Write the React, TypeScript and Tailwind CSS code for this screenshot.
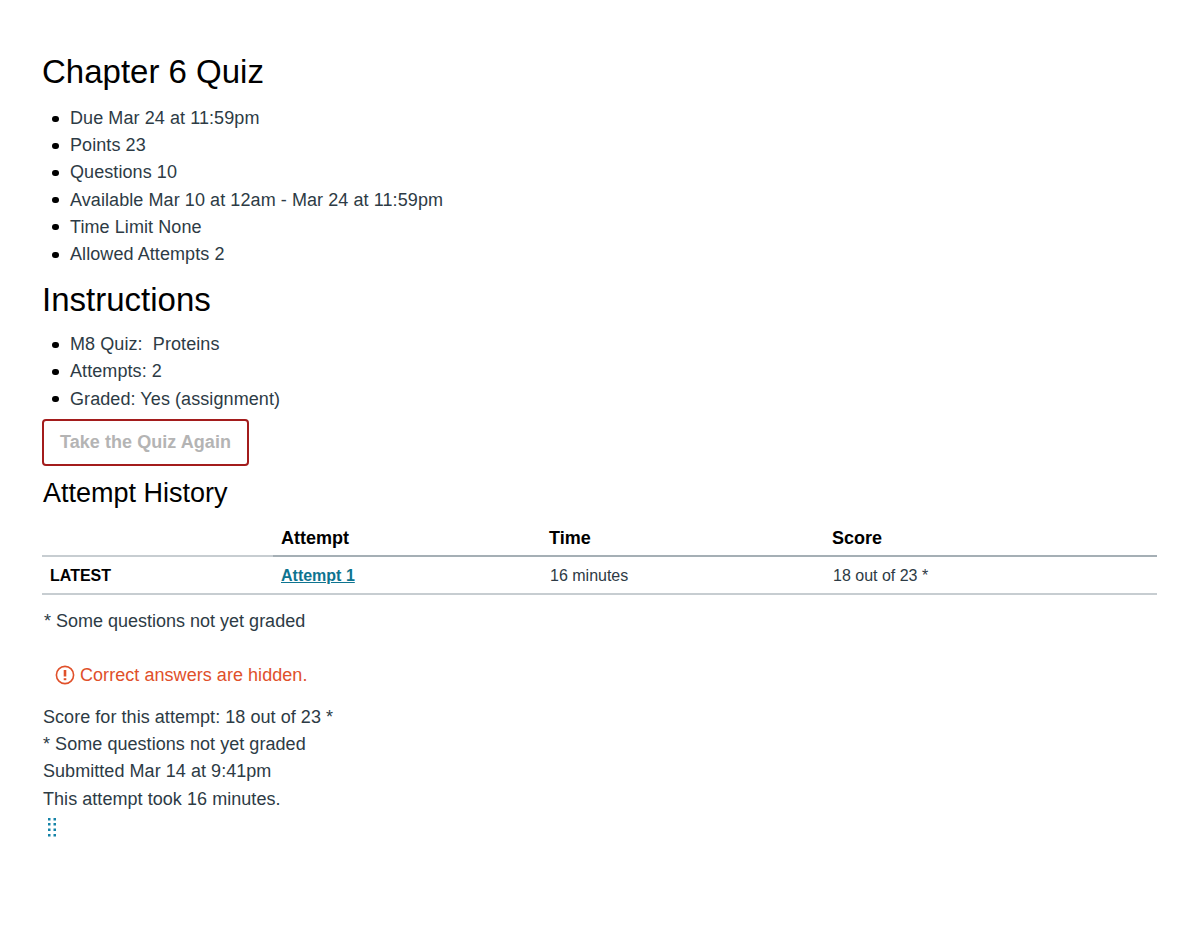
import React from 'react';

const details = [
  'Due Mar 24 at 11:59pm',
  'Points 23',
  'Questions 10',
  'Available Mar 10 at 12am - Mar 24 at 11:59pm',
  'Time Limit None',
  'Allowed Attempts 2',
];

const instructions = ['M8 Quiz:  Proteins', 'Attempts: 2', 'Graded: Yes (assignment)'];

const BulletList = ({ items }: { items: string[] }) => (
  <ul className="pl-[10px] text-[18px] tracking-[0.08px] leading-[27.2px] text-[#2d3b45] whitespace-pre">
    {items.map((item) => (
      <li key={item} className="flex items-center gap-[11px]">
        <span className="w-[7px] h-[6px] rounded-full bg-black" />
        <span>{item}</span>
      </li>
    ))}
  </ul>
);

export default function App() {
  return (
    <div className="min-h-[927px] bg-white pl-[42px] pr-[43px] pt-[52px] font-['Liberation_Sans',Arial,sans-serif] text-[#2d3b45]">
      <h1 className="text-[33px] leading-[40px] text-black mb-[13px]">Chapter 6 Quiz</h1>
      <BulletList items={details} />

      <h2 className="text-[33px] leading-[40px] text-black mt-[12px] mb-[11px]">Instructions</h2>
      <BulletList items={instructions} />

      <button className="block mt-[6px] w-[207px] h-[47px] rounded-[4px] border-2 border-[#a31c1c] text-[18px] font-bold text-[#b4b4b4] tracking-[0.05px]">
        Take the Quiz Again
      </button>

      <h3 className="text-[27px] leading-[34px] text-black mt-[10px] ml-px">Attempt History</h3>

      <table className="w-full mt-[12px] table-fixed text-[16px] border-collapse">
        <thead>
          <tr className="h-[34px] text-[18px]">
            <th className="w-[231px] border-b-2 border-[#c7cdd1]" />
            <th className="w-[268px] text-left font-bold text-black pl-[8px] border-b-2 border-[#a5afb5]">Attempt</th>
            <th className="w-[283px] text-left font-bold text-black pl-[8px] border-b-2 border-[#a5afb5]">Time</th>
            <th className="text-left font-bold text-black pl-[8px] border-b-2 border-[#a5afb5]">Score</th>
          </tr>
        </thead>
        <tbody>
          <tr className="h-[38px] border-b-2 border-[#c7cdd1]">
            <td className="pl-[8px] pt-[2px] font-bold text-black">LATEST</td>
            <td className="pl-[8px] pt-[2px]">
              <a href="#" className="font-bold text-[#0e7490] underline">Attempt 1</a>
            </td>
            <td className="pl-[9px] pt-[2px]">16 minutes</td>
            <td className="pl-[9px] pt-[2px]">18 out of 23 *</td>
          </tr>
        </tbody>
      </table>

      <p className="mt-[13px] ml-[2px] text-[18px] leading-[27px]">* Some questions not yet graded</p>

      <div className="mt-[27px] ml-[13px] flex items-center gap-[5px] text-[18px] tracking-[0.05px] leading-[27px] text-[#e0502a]">
        <svg width="20" height="20" viewBox="0 0 20 20" fill="none" stroke="currentColor">
          <circle cx="10" cy="10" r="8.6" strokeWidth="1.6" />
          <path d="M10 5v6.5" strokeWidth="2.6" />
          <path d="M10 13.2v2" strokeWidth="2.6" />
        </svg>
        <span>Correct answers are hidden.</span>
      </div>

      <div className="mt-[15px] ml-px text-[18px] tracking-[0.05px] leading-[27.3px]">
        <div>Score for this attempt: 18 out of 23 *</div>
        <div>* Some questions not yet graded</div>
        <div>Submitted Mar 14 at 9:41pm</div>
        <div>This attempt took 16 minutes.</div>
      </div>

      <svg className="ml-[6px] mt-[5px]" width="12" height="20" viewBox="0 0 12 20" fill="#1583a8">
        <rect x="0" y="0" width="2.5" height="2.5" />
        <rect x="5.5" y="0" width="2.5" height="2.5" />
        <rect x="0" y="5" width="2.5" height="2.5" />
        <rect x="5.5" y="5" width="2.5" height="2.5" />
        <rect x="0" y="10.5" width="2.5" height="2.5" />
        <rect x="5.5" y="10.5" width="2.5" height="2.5" />
        <rect x="0" y="16" width="2.5" height="2.5" />
        <rect x="5.5" y="16" width="2.5" height="2.5" />
      </svg>
    </div>
  );
}
